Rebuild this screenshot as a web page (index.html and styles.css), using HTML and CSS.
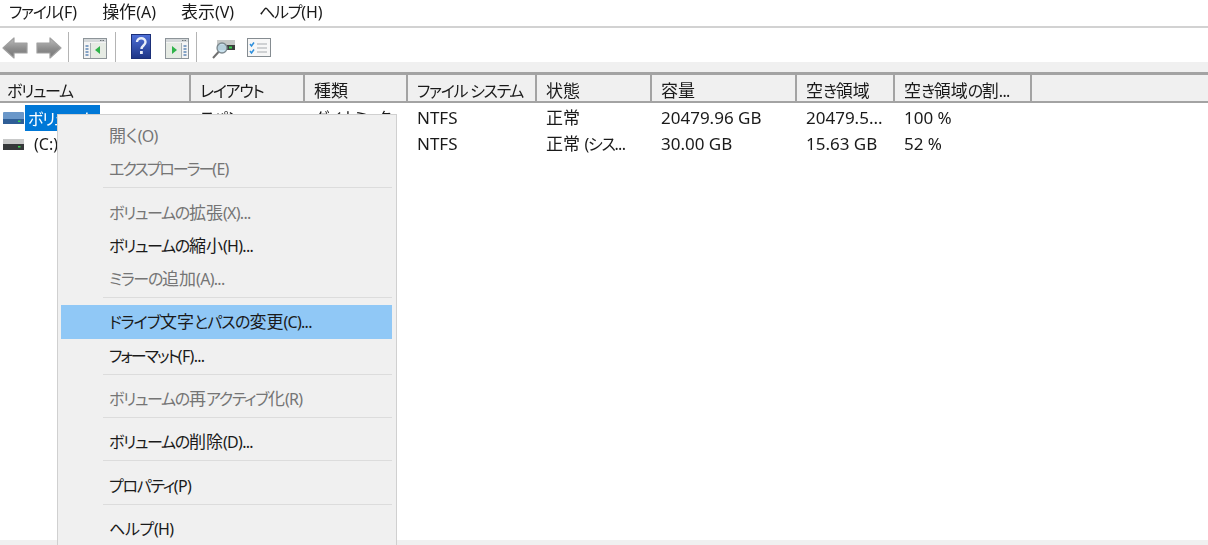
FILE: index.html
```html
<!DOCTYPE html>
<html lang="ja">
<head>
<meta charset="utf-8">
<title>ディスクの管理</title>
<link rel="stylesheet" href="styles.css">
</head>
<body>
<div class="app">
  <nav class="menubar">
    <span><span class="k">ファイル</span><span class="l">(F)</span></span><span>操作<span class="l">(A)</span></span><span>表示<span class="l">(V)</span></span><span><span class="k">ヘルプ</span><span class="l">(H)</span></span>
  </nav>
  <div class="toolbar">
    <svg class="tb-arrows" width="62" height="24" viewBox="0 0 62 24">
      <defs>
        <linearGradient id="ag" x1="0" y1="0" x2="0" y2="1"><stop offset="0" stop-color="#bdbdbd"/><stop offset=".55" stop-color="#8c8c8c"/><stop offset="1" stop-color="#777"/></linearGradient>
      </defs>
      <path d="M3 12 14 2V7H27V17H14V22Z" fill="url(#ag)" stroke="#a0a0a0" stroke-width="1.200" stroke-linejoin="round"/>
      <path d="M61 12 50 2V7H37V17H50V22Z" fill="url(#ag)" stroke="#a0a0a0" stroke-width="1.200" stroke-linejoin="round"/>
    </svg>
    <i class="tb-sep first"></i>
    <svg class="tb-icon panel-left" width="24" height="21" viewBox="0 0 24 21">
      <rect x=".5" y=".5" width="23" height="20" fill="#f4f4f4" stroke="#8d9499"/>
      <rect x="1" y="1" width="22" height="3" fill="#d4d8da"/>
      <path d="M17 2.500h1.500M19.500 2.500h1.500" stroke="#6c7479"/>
      <path d="M7.500 5v15" stroke="#a9b0b4"/>
      <path d="M2.500 8h3M2.500 11h3M2.500 14h3M2.500 17h3" stroke="#5f87b5" stroke-width="1.500"/>
      <rect x="8" y="5" width="15" height="15" fill="#e6ebe4"/>
      <path d="M17 8v8l-5-4z" fill="#2fb34a"/>
    </svg>
    <i class="tb-sep second"></i>
    <svg class="tb-help" width="20" height="25" viewBox="0 0 20 25">
      <defs>
        <linearGradient id="hg" x1="0" y1="0" x2="0" y2="1"><stop offset="0" stop-color="#4f70d8"/><stop offset="1" stop-color="#1c3486"/></linearGradient>
      </defs>
      <rect x=".5" y=".5" width="19" height="24" fill="url(#hg)" stroke="#1b2f78"/>
      <path d="M6 8c0-5 8.500-5 8.500 0 0 3.500-4 3.500-4 7" fill="none" stroke="#e9eef9" stroke-width="2.400"/>
      <rect x="9" y="17" width="2.800" height="3" fill="#e9eef9"/>
    </svg>
    <svg class="tb-icon panel-right" width="24" height="21" viewBox="0 0 24 21">
      <rect x=".5" y=".5" width="23" height="20" fill="#f4f4f4" stroke="#8d9499"/>
      <rect x="1" y="1" width="22" height="3" fill="#d4d8da"/>
      <path d="M17 2.500h1.500M19.500 2.500h1.500" stroke="#6c7479"/>
      <path d="M16.500 5v15" stroke="#a9b0b4"/>
      <path d="M18.500 8h3M18.500 11h3M18.500 14h3M18.500 17h3" stroke="#5f87b5" stroke-width="1.500"/>
      <rect x="1" y="5" width="15" height="15" fill="#e6ebe4"/>
      <path d="M7 8v8l5-4z" fill="#2fb34a"/>
    </svg>
    <i class="tb-sep third"></i>
    <svg class="tb-icon drive-search" width="24" height="22" viewBox="0 0 24 22">
      <rect x="5" y="2" width="18" height="5" fill="#c6c9c8"/>
      <rect x="5" y="7" width="18" height="5" fill="#3a3f3c"/>
      <rect x="17" y="8.500" width="3" height="2" fill="#38d24e"/>
      <circle cx="10" cy="10" r="5" fill="#c4dfec" fill-opacity=".9" stroke="#7d8a90" stroke-width="1.300"/>
      <path d="M6.500 14 1 20" stroke="#707070" stroke-width="2"/>
    </svg>
    <svg class="tb-icon checklist" width="24" height="19" viewBox="0 0 24 19">
      <rect x=".5" y=".5" width="23" height="18" fill="#f7f7f7" stroke="#858c91"/>
      <path d="M3 6l1.500 2L7 4.500M3 13l1.500 2L7 11.500" fill="none" stroke="#2e8fdc" stroke-width="1.500"/>
      <path d="M10 6h10M10 10h10M10 14h10" stroke="#a7acaf" stroke-width="1.200"/>
    </svg>
  </div>
  <div class="band"></div>
  <section class="table">
    <div class="row head">
      <div><span class="k">ボリューム</span></div><div><span class="k">レイアウト</span></div><div>種類</div><div><span class="k">ファイル システム</span></div><div>状態</div><div>容量</div><div>空<span class="k">き</span>領域</div><div>空<span class="k">き</span>領域<span class="k">の</span>割<span class="l">...</span></div><div></div>
    </div>
    <div class="row body">
      <div class="name">
        <svg class="drive" width="21" height="12" viewBox="0 0 21 12">
          <rect x="0" y="0" width="21" height="12" rx="1" fill="#6a97c9"/>
          <rect x="0" y="7" width="21" height="5" fill="#2f5e96"/>
          <rect x="15" y="8.500" width="2.500" height="1.500" fill="#3ad14f"/>
        </svg>
        <span class="sel"><span class="k">ボリューム</span></span>
      </div>
      <div><span class="k">スパン</span></div><div><span class="k">ダイナミック</span></div><div>NTFS</div><div>正常</div><div>20479.96 GB</div><div>20479.5...</div><div>100 %</div><div></div>
    </div>
    <div class="row body">
      <div class="name">
        <svg class="drive" width="21" height="11" viewBox="0 0 21 11">
          <rect x="0" y="0" width="21" height="5" fill="#c8c9c9"/>
          <rect x="0" y="5" width="21" height="6" fill="#35383a"/>
          <rect x="15" y="7" width="2.500" height="1.500" fill="#3ad14f"/>
        </svg>
        <span class="plain">(C:)</span>
      </div>
      <div><span class="k">シンプル</span></div><div><span class="k">ベーシック</span></div><div>NTFS</div><div>正常 <span class="k">(シス</span><span class="l">...</span></div><div>30.00 GB</div><div>15.63 GB</div><div>52 %</div><div></div>
    </div>
  </section>
  <div class="statusband"></div>
  <ul class="context">
    <li class="off">開く<span class="l">(O)</span></li>
    <li class="off sep"><span class="kk">エクスプローラー</span><span class="l">(E)</span></li>
    <li class="off"><span class="k">ボリュームの</span>拡張<span class="l">(X)...</span></li>
    <li><span class="k">ボリュームの</span>縮小<span class="l">(H)...</span></li>
    <li class="off sep"><span class="k">ミラーの</span>追加<span class="l">(A)...</span></li>
    <li class="active"><span class="k">ドライブ</span>文字<span class="k">とパスの</span>変更<span class="l">(C)...</span></li>
    <li class="sep"><span class="kk">フォーマット</span><span class="l">(F)...</span></li>
    <li class="off sep"><span class="k">ボリュームの</span>再<span class="k">アクティブ</span>化<span class="l">(R)</span></li>
    <li class="sep"><span class="k">ボリュームの</span>削除<span class="l">(D)...</span></li>
    <li class="sep"><span class="k">プロパティ</span><span class="l">(P)</span></li>
    <li class="last"><span class="k">ヘルプ</span><span class="l">(H)</span></li>
  </ul>
</div>
</body>
</html>
```
FILE: styles.css
```css
* { box-sizing: border-box; }
html, body { margin: 0; height: 100%; background: #fff; overflow: hidden; }
body {
  font-family: "Noto Sans", "Noto Sans CJK JP", sans-serif;
  font-size: 17px;
  color: #1a1a1a;
  font-feature-settings: "palt";
}
.k { font-size: 16px; letter-spacing: -1.3px; }
.kk { font-size: 16px; letter-spacing: -2px; }
.l { font-size: 16px; letter-spacing: -.7px; }
.app { position: relative; height: 545px; display: flex; flex-direction: column; filter: blur(.35px); }

.menubar {
  height: 28px;
  display: flex;
  align-items: center;
  gap: 25px;
  padding: 0 0 5px 9px;
  border-bottom: 2px solid #d2d2d2;
}
.menubar .l { letter-spacing: 0; }
.toolbar {
  height: 34px;
  padding-top: 3px;
  display: flex;
  align-items: center;
}
.toolbar svg { display: block; flex: none; }
.tb-sep { width: 1px; height: 30px; background: #b4b4b4; flex: none; }
.tb-arrows { margin-top: 3px; }
.tb-sep.first { margin-left: 6px; }
.tb-icon { margin-left: 14px; }
.panel-left, .panel-right { margin-top: 4px; }
.tb-sep.second { margin-left: 8px; }
.tb-help { margin-left: 15px; }
.panel-right { margin-left: 14px; }
.tb-sep.third { margin-left: 7px; }
.drive-search { margin-left: 15px; margin-top: 4px; }
.checklist { margin-left: 11px; margin-top: 2px; }

.band { height: 10px; background: #f0f0f0; }
.table { flex: 1; border-top: 3px solid #a3a3a3; }
.row {
  display: grid;
  grid-template-columns: 191px 114px 103px 129px 115px 145px 98px 137px 1fr;
}
.head { height: 28px; background: #f0f0f0; border-bottom: 2px solid #a3a3a3; }
.head > div {
  border-right: 2px solid #a3a3a3;
  padding-left: 9px;
  line-height: 31px;
  white-space: nowrap;
  overflow: hidden;
}
.head > div:first-child { padding-left: 7px; }
.head > div:last-child { border-right: 0; }
.body { height: 26px; line-height: 28px; }
.body > div { padding-left: 9px; white-space: nowrap; }
.head + .body { margin-top: 1px; }
.name { display: flex; align-items: center; padding-left: 3px !important; }
.sel { background: #0078d7; color: #fff; margin-left: 1px; width: 75px; padding-left: 3px; height: 26px; }
.plain { margin-left: 10px; font-size: 16px; }

.statusband { height: 5px; background: #f0f0f0; }

.context {
  position: absolute;
  left: 57px;
  top: 114px;
  width: 340px;
  height: 431px;
  margin: 0;
  padding: 4px 4px 0 3px;
  list-style: none;
  background: #f0f0f0;
  border: 1px solid #d0d0d0;
  border-bottom: 0;
}
.context li {
  height: 33.3px;
  line-height: 34px;
  padding-left: 48px;
  white-space: nowrap;
}
.context li.off { color: #757575; }
.context li.sep { height: 43.3px; position: relative; }
.context li.sep::after {
  content: "";
  position: absolute;
  left: 42px;
  right: 0;
  top: 35px;
  height: 1px;
  background: #dcdcdc;
}
.context li.active { background: #90c8f6; }
.context li.active .k { letter-spacing: -.9px; }
.context li.last .k { letter-spacing: -.3px; }
```
